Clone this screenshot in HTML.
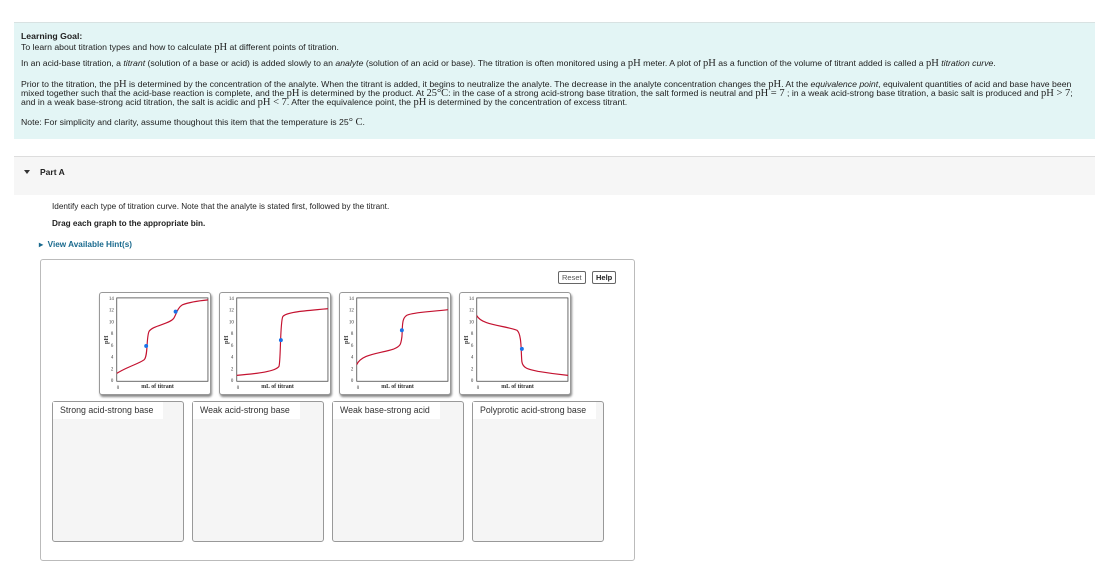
<!DOCTYPE html>
<html><head><meta charset="utf-8"><style>
*{margin:0;padding:0;box-sizing:border-box}
body{width:1104px;height:567px;background:#fff;font-family:"Liberation Sans",sans-serif;color:#222;position:relative;overflow:hidden}
.goal{position:absolute;left:14px;top:22px;width:1081px;height:117px;background:#e3f5f5;border-top:1px solid #d8e2e2;font-size:8.7px;white-space:nowrap}
.goal p{position:absolute;left:7px;line-height:10px}
.m{font-family:"Liberation Serif",serif;font-size:10.5px;line-height:0}
.part{position:absolute;left:14px;top:156px;width:1081px;height:39px;background:#f6f6f6;border-top:1px solid #ddd}
.part .tri{position:absolute;left:10px;top:13px;width:0;height:0;border-left:3.5px solid transparent;border-right:3.5px solid transparent;border-top:4px solid #333}
.part b{position:absolute;left:26px;top:10px;font-size:8.5px}
.t{position:absolute;font-size:8.2px;white-space:nowrap}
.box{position:absolute;left:40px;top:259px;width:595px;height:302px;border:1px solid #bbb;border-radius:3px}
.btn{position:absolute;top:271px;height:13px;border:1px solid #666;border-radius:2px;font-size:7.5px;line-height:11px;padding:0 3px;background:#fff}
.card{position:absolute;top:292px;width:112px;height:103px;border:1px solid #999;border-radius:3px;box-shadow:1px 2px 2px #888;background:#fff}
.bin{position:absolute;top:401px;width:132px;height:141px;border:1px solid #999;border-radius:3px;background:#f5f5f5}
.bin span{position:absolute;left:0;top:0;background:#fff;font-size:8.8px;color:#333;padding:3px 10px 4px 7px;white-space:nowrap}
</style></head><body>
<div class="goal">
<p style="top:8px"><b>Learning Goal:</b></p>
<p style="top:19px">To learn about titration types and how to calculate <span class="m">pH</span> at different points of titration.</p>
<p style="top:35px">In an acid-base titration, a <i>titrant</i> (solution of a base or acid) is added slowly to an <i>analyte</i> (solution of an acid or base). The titration is often monitored using a <span class="m">pH</span> meter. A plot of <span class="m">pH</span> as a function of the volume of titrant added is called a <span class="m">pH</span> <i>titration curve</i>.</p>
<p style="top:56px">Prior to the titration, the <span class="m">pH</span> is determined by the concentration of the analyte. When the titrant is added, it begins to neutralize the analyte. The decrease in the analyte concentration changes the <span class="m">pH</span>. At the <i>equivalence point</i>, equivalent quantities of acid and base have been</p>
<p style="top:65px">mixed together such that the acid-base reaction is complete, and the <span class="m">pH</span> is determined by the product. At <span class="m">25°C</span>: in the case of a strong acid-strong base titration, the salt formed is neutral and <span class="m">pH = 7</span> ; in a weak acid-strong base titration, a basic salt is produced and <span class="m">pH &gt; 7</span>;</p>
<p style="top:74px">and in a weak base-strong acid titration, the salt is acidic and <span class="m">pH &lt; 7</span>. After the equivalence point, the <span class="m">pH</span> is determined by the concentration of excess titrant.</p>
<p style="top:94px">Note: For simplicity and clarity,  assume thoughout this item that the temperature is 25<span class="m">° C</span>.</p>
</div>
<div class="part"><div class="tri"></div><b>Part A</b></div>
<div class="t" style="left:52px;top:202px">Identify each type of titration curve. Note that the analyte is stated first, followed by the titrant.</div>
<div class="t" style="left:52px;top:219px;font-weight:bold">Drag each graph to the appropriate bin.</div>
<div class="t" style="left:39px;top:239px;font-weight:bold;color:#1a6a8e">▸&nbsp; View Available Hint(s)</div>
<div class="box"></div>
<div class="btn" style="left:558px;color:#555">Reset</div>
<div class="btn" style="left:592px;font-weight:bold">Help</div>

<svg width="0" height="0" style="position:absolute"><defs>
<g id="ax" font-family="Liberation Serif,serif" font-size="5" fill="#333">
<rect x="17" y="5" width="93" height="85" fill="none" stroke="#444" stroke-width="0.8"/>
<text x="9" y="7">14</text><text x="9" y="19">12</text><text x="9" y="31">10</text><text x="11" y="43">8</text><text x="11" y="55">6</text><text x="11" y="67">4</text><text x="11" y="79">2</text><text x="11" y="91">0</text>
<text x="17" y="98">0</text>
<text x="42" y="97" font-size="6" font-weight="bold">mL of titrant</text>
<text transform="translate(8,52) rotate(-90)" font-size="6.5" font-weight="bold">pH</text>
</g></defs></svg>

<svg class="card" style="left:99px" viewBox="0 0 112 103"><use href="#ax"/>
<path d="M17 82 C28 75 40 72 45 68 C49 64 47 45 50 39 C54 33 70 32 75 26 C78 21 79 15 84 12 C92 9 100 8 110 7" fill="none" stroke="#c41230" stroke-width="1.2"/>
<circle cx="47" cy="54" r="2" fill="#1a73e8"/><circle cx="77" cy="19" r="2" fill="#1a73e8"/></svg>
<svg class="card" style="left:219px" viewBox="0 0 112 103"><use href="#ax"/>
<path d="M17 84 C40 82 56 80 60 75 C62 70 61 30 64 24 C68 19 90 18 110 16" fill="none" stroke="#c41230" stroke-width="1.2"/>
<circle cx="62" cy="48" r="2" fill="#1a73e8"/></svg>
<svg class="card" style="left:339px" viewBox="0 0 112 103"><use href="#ax"/>
<path d="M17 73 C22 62 40 62 55 57 C62 54 62 52 63 45 C64 35 62 24 70 22 C80 19 95 19 110 17" fill="none" stroke="#c41230" stroke-width="1.2"/>
<circle cx="63" cy="38" r="2" fill="#1a73e8"/></svg>
<svg class="card" style="left:459px" viewBox="0 0 112 103"><use href="#ax"/>
<path d="M17 23 C22 33 45 33 58 38 C63 42 62 60 63 70 C64 77 70 78 80 80 C92 82 100 83 110 84" fill="none" stroke="#c41230" stroke-width="1.2"/>
<circle cx="63" cy="57" r="2" fill="#1a73e8"/></svg>

<div class="bin" style="left:52px"><span>Strong acid-strong base</span></div>
<div class="bin" style="left:192px"><span>Weak acid-strong base</span></div>
<div class="bin" style="left:332px"><span>Weak base-strong acid</span></div>
<div class="bin" style="left:472px"><span>Polyprotic acid-strong base</span></div>
</body></html>
